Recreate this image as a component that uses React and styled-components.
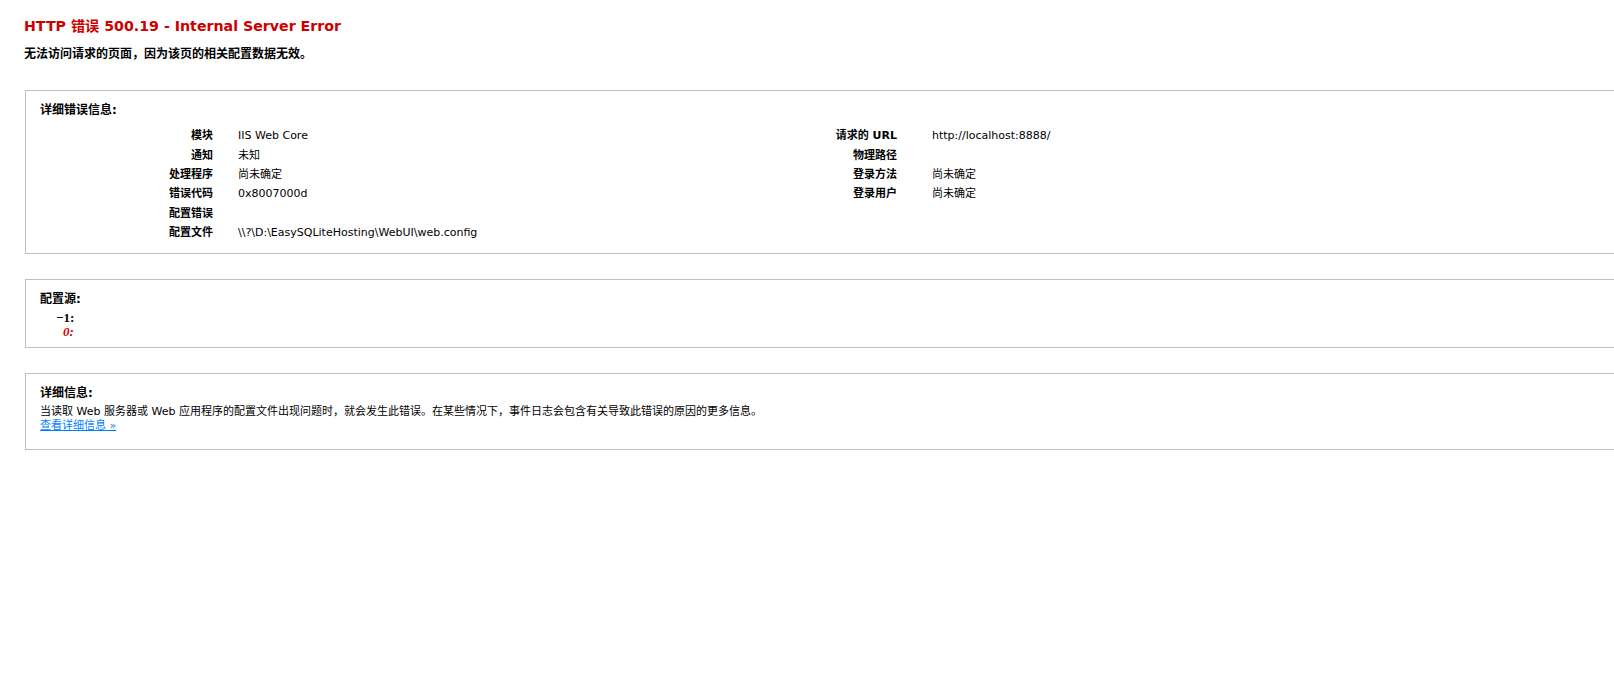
import React from 'react';
import styled, { createGlobalStyle } from 'styled-components';

const GlobalStyle = createGlobalStyle`
  body {
    margin: 0;
    background: #fff;
    color: #000;
    overflow-x: hidden;
    font-family: "DejaVu Sans", Verdana, "Noto Sans CJK SC", sans-serif;
    font-size: 11px;
  }
`;

const Page = styled.div`
  padding: 17px 0 40px 24px;
`;

const Title = styled.h3`
  margin: 0;
  font-size: 14.2px;
  line-height: 18px;
  font-weight: bold;
  color: #cc0000;
`;

const Subtitle = styled.h4`
  margin: 11px 0 0 0;
  font-size: 12px;
  line-height: 16px;
  font-weight: bold;
  color: #000;
`;

const Box = styled.fieldset`
  margin: ${p => p.$top || '25px'} 0 0 1px;
  width: 100vw;
  min-width: 0;
  box-sizing: border-box;
  border: 1px solid #c0c0c0;
  padding: ${p => p.$pad || '12px'} 14px ${p => p.$bottom || '10px'} 14px;
`;

const Legend = styled.h4`
  margin: 0;
  font-size: 12px;
  line-height: 14px;
  font-weight: bold;
  color: #000;
`;

const Details = styled.div`
  display: flex;
  margin-top: 9.35px;
`;

const Table = styled.div`
  display: grid;
  grid-template-columns: ${p => p.$label} 1fr;
  column-gap: ${p => p.$gap};
  grid-auto-rows: 19.3px;
  align-items: center;
  width: ${p => p.$width || 'auto'};
`;

const Th = styled.div`
  text-align: right;
  font-weight: bold;
  line-height: 13px;
  white-space: nowrap;
`;

const Td = styled.div`
  line-height: 13px;
  white-space: nowrap;
`;

const Source = styled.div`
  margin-top: 4.75px;
  font-family: "Liberation Serif", "Times New Roman", serif;
  font-size: 13px;
  font-weight: bold;
`;

const SourceLine = styled.div`
  line-height: 14.5px;
  padding-left: ${p => p.$indent};
  color: ${p => (p.$hl ? '#cc0000' : '#000')};
  font-style: ${p => (p.$hl ? 'italic' : 'normal')};
`;

const Para = styled.p`
  margin: 5.25px 0 0 0;
  line-height: 13.5px;
`;

const MoreLink = styled.a`
  display: block;
  line-height: 13.5px;
  color: #007eff;
  text-decoration: underline;
  width: max-content;
`;

const leftRows = [
  ['模块', 'IIS Web Core'],
  ['通知', '未知'],
  ['处理程序', '尚未确定'],
  ['错误代码', '0x8007000d'],
  ['配置错误', ''],
  ['配置文件', '\\\\?\\D:\\EasySQLiteHosting\\WebUI\\web.config'],
];

const rightRows = [
  ['请求的 URL', 'http://localhost:8888/'],
  ['物理路径', ''],
  ['登录方法', '尚未确定'],
  ['登录用户', '尚未确定'],
];

const Rows = ({ rows }) =>
  rows.map(([k, v]) => (
    <React.Fragment key={k}>
      <Th>{k}</Th>
      <Td>{v}</Td>
    </React.Fragment>
  ));

export default function App() {
  return (
    <Page>
      <GlobalStyle />
      <Title>HTTP 错误 500.19 - Internal Server Error</Title>
      <Subtitle>无法访问请求的页面，因为该页的相关配置数据无效。</Subtitle>

      <Box $top="28px" $pad="12px" $bottom="10.85px">
        <Legend>详细错误信息:</Legend>
        <Details>
          <Table $label="173px" $gap="25px" $width="620px">
            <Rows rows={leftRows} />
          </Table>
          <Table $label="237px" $gap="35px">
            <Rows rows={rightRows} />
          </Table>
        </Details>
      </Box>

      <Box $bottom="7.25px">
        <Legend>配置源:</Legend>
        <Source>
          <SourceLine $indent="16px">−1:</SourceLine>
          <SourceLine $indent="23px" $hl>0:</SourceLine>
        </Source>
      </Box>

      <Box $bottom="16.75px">
        <Legend>详细信息:</Legend>
        <Para>
          当读取 Web 服务器或 Web 应用程序的配置文件出现问题时，就会发生此错误。在某些情况下，事件日志会包含有关导致此错误的原因的更多信息。
        </Para>
        <MoreLink href="#">查看详细信息 »</MoreLink>
      </Box>
    </Page>
  );
}
